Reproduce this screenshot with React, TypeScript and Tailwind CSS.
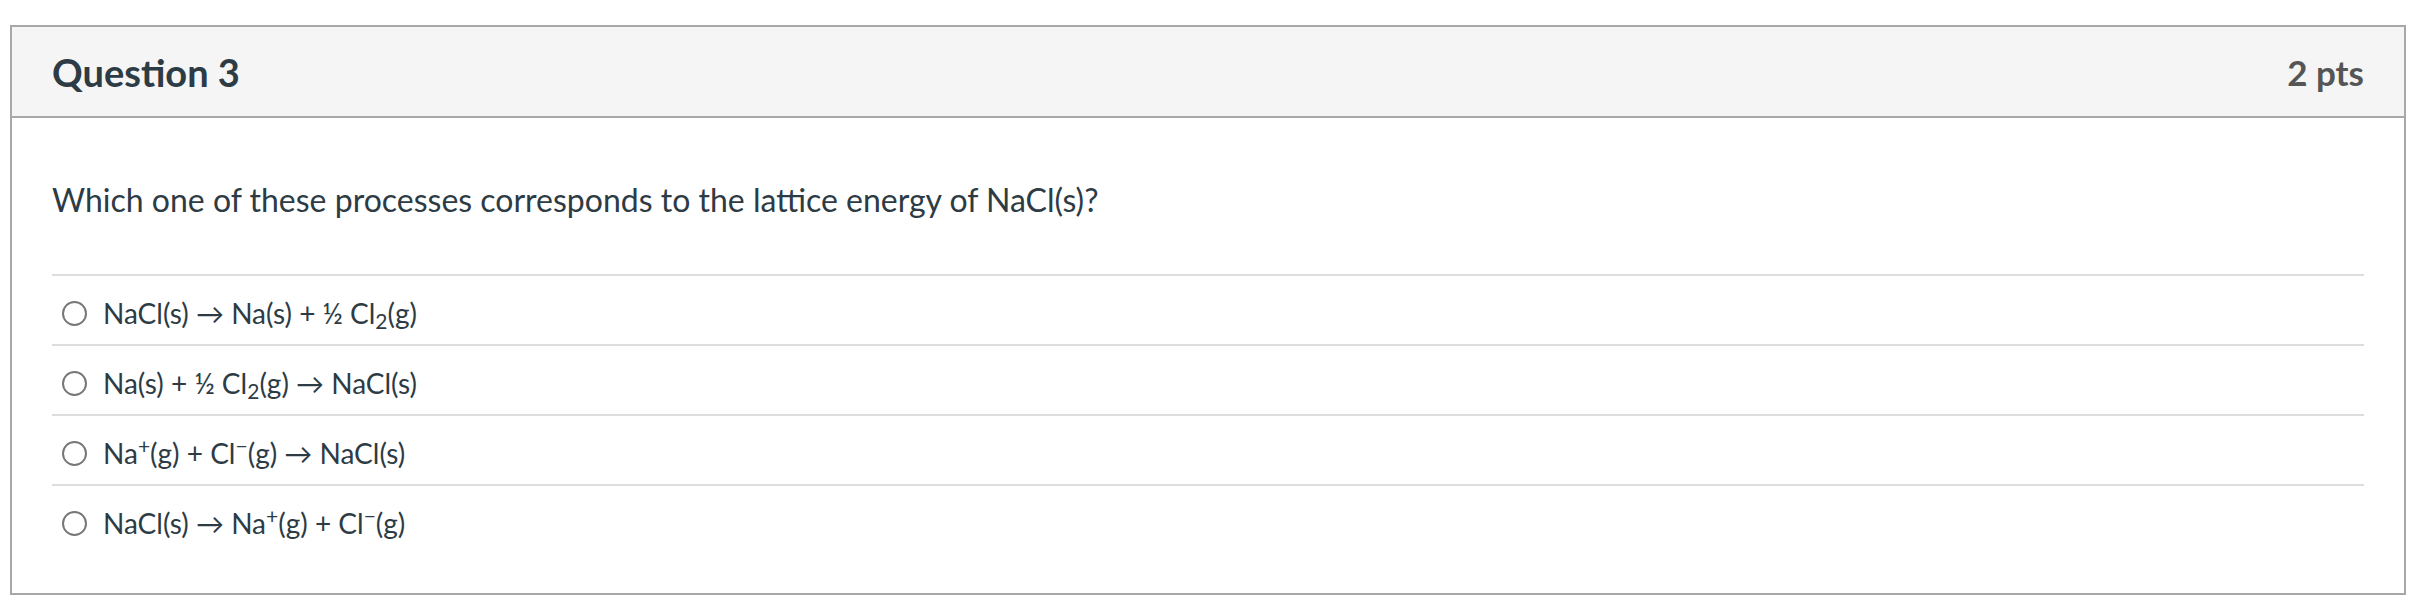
import React from "react";

const answers: React.ReactNode[] = [
  <>NaCl(s) → Na(s) + ½ Cl<sub>2</sub>(g)</>,
  <>Na(s) + ½ Cl<sub>2</sub>(g) → NaCl(s)</>,
  <>Na<sup>+</sup>(g) + Cl<sup>−</sup>(g) → NaCl(s)</>,
  <>NaCl(s) → Na<sup>+</sup>(g) + Cl<sup>−</sup>(g)</>,
];

export default function App() {
  return (
    <div
      className="w-[2428px] h-[615px] bg-white pt-[25px] pl-[10px]"
      style={{ fontFamily: "Lato, 'Noto Sans', sans-serif" }}
    >
      <div className="w-[2396px] border-2 border-[#a8a8a8] bg-white">
        <div className="h-[91px] bg-[#f5f5f5] border-b-2 border-[#a8a8a8] flex items-center justify-between px-[40px]">
          <div className="text-[38px] leading-[44px] font-bold text-[#2d3b45]">Question 3</div>
          <div className="text-[35px] leading-[44px] font-bold text-[#555555]">2 pts</div>
        </div>
        <div className="px-[40px] pt-[62px] pb-[39px]">
          <div className="text-[32px] leading-[40px] text-[#2d3b45]">
            Which one of these processes corresponds to the lattice energy of NaCl(s)?
          </div>
          <div className="mt-[54px]">
            {answers.map((a, i) => (
              <div
                key={i}
                className="border-t-2 border-[#dddddd] h-[70px] pt-[6px] flex items-center"
              >
                <span className="ml-[10px] w-[25px] h-[25px] rounded-full border-2 border-[#777777] bg-white shrink-0" />
                <span className="ml-[16px] text-[28px] leading-[40px] text-[#2d3b45]">{a}</span>
              </div>
            ))}
          </div>
        </div>
      </div>
    </div>
  );
}
